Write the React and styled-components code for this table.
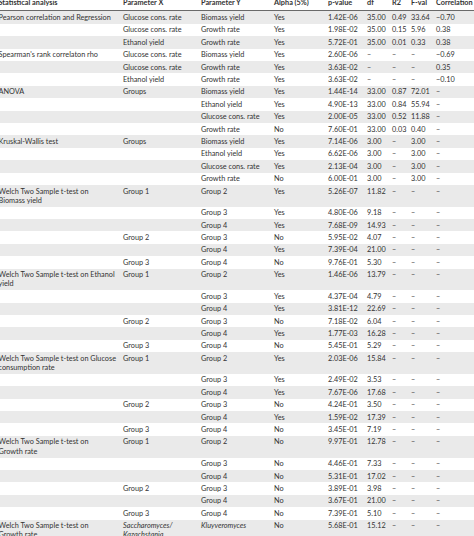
import React from 'react';
import styled, { createGlobalStyle } from 'styled-components';

const GlobalStyle = createGlobalStyle`
  html, body { margin: 0; padding: 0; background: #fff; overflow: hidden; }
  body { font-family: Lato, "Open Sans", sans-serif; color: #333; }
`;

const Page = styled.div`
  width: 100%;
  height: 536px;
  overflow: hidden;
`;

const Table = styled.table`
  border-collapse: collapse;
  table-layout: fixed;
  width: 497px;
  margin: -4px 0 0 -1.5px;
  font-size: 7.3px;
  line-height: 9.3px;

  th, td {
    padding: 1.55px 0;
    text-align: left;
    vertical-align: top;
    white-space: nowrap;
  }
  th {
    font-weight: 700;
    padding-bottom: 3.65px;
    border-bottom: 1px solid #6a6a6a;
  }
  tbody tr:nth-child(odd) { background: #eaeaea; }
`;

const Italic = styled.span`font-style: italic;`;

const widths = [124.5, 78, 73, 54, 39, 25, 19, 25, 60];
const headers = ['Statistical analysis', 'Parameter X', 'Parameter Y', 'Alpha (5%)', 'p-value', 'df', 'R2', 'F-val', 'Correlation'];

const D = '\u2013';
const M = '\u2212';

const rows = [
  ['Pearson correlation and Regression', 'Glucose cons. rate', 'Biomass yield', 'Yes', '1.42E-06', '35.00', '0.49', '33.64', M + '0.70'],
  ['', 'Glucose cons. rate', 'Growth rate', 'Yes', '1.98E-02', '35.00', '0.15', '5.96', '0.38'],
  ['', 'Ethanol yield', 'Growth rate', 'Yes', '5.72E-01', '35.00', '0.01', '0.33', '0.38'],
  ["Spearman's rank correlaton rho", 'Glucose cons. rate', 'Biomass yield', 'Yes', '2.60E-06', D, D, D, M + '0.69'],
  ['', 'Glucose cons. rate', 'Growth rate', 'Yes', '3.63E-02', D, D, D, '0.35'],
  ['', 'Ethanol yield', 'Growth rate', 'Yes', '3.63E-02', D, D, D, M + '0.10'],
  ['ANOVA', 'Groups', 'Biomass yield', 'Yes', '1.44E-14', '33.00', '0.87', '72.01', D],
  ['', '', 'Ethanol yield', 'Yes', '4.90E-13', '33.00', '0.84', '55.94', D],
  ['', '', 'Glucose cons. rate', 'Yes', '2.00E-05', '33.00', '0.52', '11.88', D],
  ['', '', 'Growth rate', 'No', '7.60E-01', '33.00', '0.03', '0.40', D],
  ['Kruskal-Wallis test', 'Groups', 'Biomass yield', 'Yes', '7.14E-06', '3.00', D, '3.00', D],
  ['', '', 'Ethanol yield', 'Yes', '6.62E-06', '3.00', D, '3.00', D],
  ['', '', 'Glucose cons. rate', 'Yes', '2.13E-04', '3.00', D, '3.00', D],
  ['', '', 'Growth rate', 'No', '6.00E-01', '3.00', D, '3.00', D],
  [['Welch Two Sample t-test on', 'Biomass yield'], 'Group 1', 'Group 2', 'Yes', '5.26E-07', '11.82', D, D, D],
  ['', '', 'Group 3', 'Yes', '4.80E-06', '9.18', D, D, D],
  ['', '', 'Group 4', 'Yes', '7.68E-09', '14.93', D, D, D],
  ['', 'Group 2', 'Group 3', 'No', '5.95E-02', '4.07', D, D, D],
  ['', '', 'Group 4', 'Yes', '7.39E-04', '21.00', D, D, D],
  ['', 'Group 3', 'Group 4', 'No', '9.76E-01', '5.30', D, D, D],
  [['Welch Two Sample t-test on Ethanol', 'yield'], 'Group 1', 'Group 2', 'Yes', '1.46E-06', '13.79', D, D, D],
  ['', '', 'Group 3', 'Yes', '4.37E-04', '4.79', D, D, D],
  ['', '', 'Group 4', 'Yes', '3.81E-12', '22.69', D, D, D],
  ['', 'Group 2', 'Group 3', 'No', '7.18E-02', '6.04', D, D, D],
  ['', '', 'Group 4', 'Yes', '1.77E-03', '16.28', D, D, D],
  ['', 'Group 3', 'Group 4', 'No', '5.45E-01', '5.29', D, D, D],
  [['Welch Two Sample t-test on Glucose', 'consumption rate'], 'Group 1', 'Group 2', 'Yes', '2.03E-06', '15.84', D, D, D],
  ['', '', 'Group 3', 'Yes', '2.49E-02', '3.53', D, D, D],
  ['', '', 'Group 4', 'Yes', '7.67E-06', '17.68', D, D, D],
  ['', 'Group 2', 'Group 3', 'No', '4.24E-01', '3.50', D, D, D],
  ['', '', 'Group 4', 'Yes', '1.59E-02', '17.39', D, D, D],
  ['', 'Group 3', 'Group 4', 'No', '3.45E-01', '7.19', D, D, D],
  [['Welch Two Sample t-test on', 'Growth rate'], 'Group 1', 'Group 2', 'No', '9.97E-01', '12.78', D, D, D],
  ['', '', 'Group 3', 'No', '4.46E-01', '7.33', D, D, D],
  ['', '', 'Group 4', 'No', '5.31E-01', '17.02', D, D, D],
  ['', 'Group 2', 'Group 3', 'No', '3.89E-01', '3.98', D, D, D],
  ['', '', 'Group 4', 'No', '3.67E-01', '21.00', D, D, D],
  ['', 'Group 3', 'Group 4', 'No', '7.39E-01', '5.10', D, D, D],
  [
    ['Welch Two Sample t-test on', 'Growth rate'],
    <Italic>Saccharomyces/<br />Kazachstania</Italic>,
    <Italic>Kluyveromyces</Italic>,
    'No', '5.68E-01', '15.12', D, D, D,
  ],
];

// a cell holding a string, a node, or a list of lines
const Cell = ({ value }) => {
  if (Array.isArray(value)) {
    return (
      <td>
        {value.map((line, i) => (
          <React.Fragment key={i}>
            {i > 0 && <br />}
            {line}
          </React.Fragment>
        ))}
      </td>
    );
  }
  return <td>{value}</td>;
};

const App = () => (
  <Page>
    <GlobalStyle />
    <Table>
      <colgroup>
        {widths.map((w, i) => <col key={i} style={{ width: w }} />)}
      </colgroup>
      <thead>
        <tr>
          {headers.map(h => <th key={h}>{h}</th>)}
        </tr>
      </thead>
      <tbody>
        {rows.map((row, i) => (
          <tr key={i}>
            {row.map((v, j) => <Cell key={j} value={v} />)}
          </tr>
        ))}
      </tbody>
    </Table>
  </Page>
);

export default App;
